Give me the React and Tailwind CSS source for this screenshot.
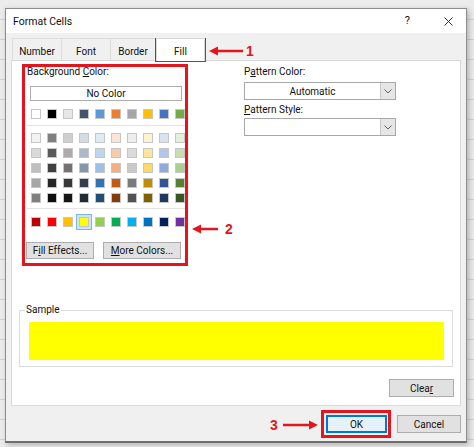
import React from "react";

const THEME = ["#FFFFFF", "#000000", "#E7E6E6", "#44546A", "#5B9BD5", "#ED7D31", "#A5A5A5", "#FFC000", "#4472C4", "#70AD47"];

const TINTS = [
  ["#F2F2F2", "#7F7F7F", "#D0CECE", "#D6DCE4", "#DDEBF7", "#FCE4D6", "#EDEDED", "#FFF2CC", "#D9E1F2", "#E2EFDA"],
  ["#D9D9D9", "#595959", "#AEAAAA", "#ACB9CA", "#BDD7EE", "#F8CBAD", "#DBDBDB", "#FFE699", "#B4C6E7", "#C6E0B4"],
  ["#BFBFBF", "#404040", "#757171", "#8497B0", "#9BC2E6", "#F4B084", "#C9C9C9", "#FFD966", "#8EA9DB", "#A9D08E"],
  ["#A6A6A6", "#262626", "#3A3838", "#333F4F", "#2F75B5", "#C65911", "#7B7B7B", "#BF8F00", "#305496", "#548235"],
  ["#808080", "#0D0D0D", "#161616", "#222B35", "#1F4E78", "#833C0C", "#525252", "#806000", "#203764", "#375623"],
];

const STANDARD = ["#C00000", "#FF0000", "#FFC000", "#FFFF00", "#92D050", "#00B050", "#00B0F0", "#0070C0", "#002060", "#7030A0"];

const Swatch = ({ color, selected }) => (
  <div className={selected ? "-m-[3px] border border-[#7fb4e6] bg-[#cce4f7] p-[2px]" : ""}>
    <div className="h-[10px] w-[10px] border border-[#c6c6c6]" style={{ backgroundColor: color }} />
  </div>
);

const SwatchRow = ({ colors, selectedIndex }) => (
  <div className="flex gap-[6px]">
    {colors.map((c, i) => (
      <Swatch key={i} color={c} selected={i === selectedIndex} />
    ))}
  </div>
);

const Chevron = () => (
  <svg width="8" height="5" viewBox="0 0 8 5">
    <polyline points="0.5,0.5 4,4 7.5,0.5" fill="none" stroke="#606060" strokeWidth="1" />
  </svg>
);

const Dropdown = ({ value }) => (
  <div className="flex h-[18px] w-[152px] border border-[#a8a8a8] bg-white">
    <div className="flex flex-1 items-center justify-center">{value}</div>
    <div className="flex w-[15px] items-center justify-center border-l border-[#c8c8c8] bg-[#e6e6e6]">
      <Chevron />
    </div>
  </div>
);

const Button = ({ className = "", children }) => (
  <div className={"flex items-center justify-center border border-[#adadad] bg-[#e1e1e1] " + className}>
    {children}
  </div>
);

const Tab = ({ label, width, active }) => (
  <div
    className={
      active
        ? "relative z-10 -mb-px flex items-center justify-center border border-b-0 border-[#d9d9d9] bg-white pt-[3px]"
        : "flex items-center justify-center border-t border-r border-[#dcdcdc] pt-[3px] first:border-l"
    }
    style={{ width }}
  >
    {label}
  </div>
);

export default function App() {
  return (
    <div
      className="relative h-[447px] w-[474px] overflow-hidden bg-[#ececec] bg-[repeating-linear-gradient(180deg,#ececec_0px,#ececec_19px,#d2d2d2_19px,#d2d2d2_20px)] pt-[8px] pl-[5px] text-[10px] text-[#111]"
      style={{ fontFamily: 'Roboto, "Noto Sans", sans-serif' }}
    >
      <div className="flex h-[435px] w-[462px] flex-col border border-[#8c8c8c] border-b-2 border-b-[#6e6e6e] bg-[#f0f0f0] shadow-[2px_2px_6px_rgba(0,0,0,0.25)]">
        {/* title bar */}
        <div className="flex h-[24px] shrink-0 items-center bg-white pt-px pl-[7px]">
          <span className="text-[10.5px]">Format Cells</span>
          <span className="ml-auto mr-[34px] text-[11px]">?</span>
          <svg className="mr-[13px]" width="9" height="9" viewBox="0 0 9 9">
            <path d="M0.5 0.5 L8.5 8.5 M8.5 0.5 L0.5 8.5" stroke="#333" strokeWidth="1" />
          </svg>
        </div>

        {/* tabs */}
        <div className="mt-[5px] flex h-[22px] shrink-0 pl-[6px]">
          <Tab label="Number" width={50} />
          <Tab label="Font" width={49} />
          <Tab label="Border" width={45} />
          <Tab label="Fill" width={49} active />
        </div>

        {/* tab panel */}
        <div className="mx-[5px] flex h-[346px] shrink-0 flex-col border border-[#d9d9d9] bg-white">
          <div className="flex">
            {/* background colour */}
            <div className="ml-[14px] w-[160px] pt-[4px]">
              <div className="pl-px leading-[14px]">
                Background <span className="underline">C</span>olor:
              </div>
              <div className="mt-[7px] ml-[4px] flex h-[15px] w-[152px] items-center justify-center border border-[#adadad] bg-white">
                No Color
              </div>
              <div className="mt-[8px] ml-[5px]">
                <SwatchRow colors={THEME} />
              </div>
              <div className="mt-[6px] mx-px h-px bg-[#e3e3e3]" />
              <div className="mt-[7px] ml-[5px] flex flex-col gap-[5px]">
                {TINTS.map((row, i) => (
                  <SwatchRow key={i} colors={row} />
                ))}
              </div>
              <div className="mt-[5px] mx-px h-px bg-[#e3e3e3]" />
              <div className="mt-[8px] ml-[5px]">
                <SwatchRow colors={STANDARD} selectedIndex={3} />
              </div>
              <div className="mt-[15px] flex gap-[9px]">
                <Button className="h-[17px] w-[68px]">
                  F<span className="underline">i</span>ll Effects...
                </Button>
                <Button className="h-[17px] w-[78px]">
                  <span className="underline">M</span>ore Colors...
                </Button>
              </div>
            </div>

            {/* pattern */}
            <div className="ml-[58px] pt-[4px]">
              <div className="leading-[14px]">
                P<span className="underline">a</span>ttern Color:
              </div>
              <div className="mt-[3px]">
                <Dropdown value="Automatic" />
              </div>
              <div className="mt-[3px] leading-[14px]">
                <span className="underline">P</span>attern Style:
              </div>
              <div className="mt-px">
                <Dropdown value="" />
              </div>
            </div>
          </div>

          {/* sample */}
          <fieldset className="mx-[7px] mt-[44px] border border-[#dcdcdc] p-0">
            <legend className="ml-[5px] px-px leading-[14px]">Sample</legend>
            <div className="mt-[5px] mb-[6px] ml-[9px] mr-[8px] h-[38px] bg-[#FFFF00]" />
          </fieldset>

          <div className="mt-[12px] mr-[6px] self-end">
            <Button className="h-[18px] w-[65px]">
              Clea<span className="underline">r</span>
            </Button>
          </div>
        </div>

        {/* dialog buttons */}
        <div className="mt-[9px] flex justify-end gap-[10px] pr-[5px]">
          <div className="flex h-[18px] w-[61px] items-center justify-center border border-[#0078d7] bg-[#e5f1fb] shadow-[inset_0_0_0_1px_#0078d7]">
            OK
          </div>
          <Button className="h-[18px] w-[64px]">Cancel</Button>
        </div>
      </div>

      {/* annotations */}
      <div className="pointer-events-none absolute left-[155px] top-[38px] h-[24px] w-[51px] border-2 border-[#e3161e]" />
      <div className="pointer-events-none absolute left-[22px] top-[64px] h-[202px] w-[166px] border-[3px] border-[#e3161e]" />
      <div className="pointer-events-none absolute left-[321px] top-[410px] h-[28px] w-[70px] border-[3px] border-[#e3161e]" />

      <svg className="pointer-events-none absolute left-0 top-0" width="474" height="447" viewBox="0 0 474 447">
        <g fill="#e3161e" stroke="#e3161e">
          <line x1="216" y1="51" x2="243" y2="51" strokeWidth="2.5" />
          <polygon points="209,51 218,46.5 218,55.5" stroke="none" />
          <line x1="199" y1="229" x2="218" y2="229" strokeWidth="2.5" />
          <polygon points="192,229 201,224.5 201,233.5" stroke="none" />
          <line x1="283" y1="425" x2="311" y2="425" strokeWidth="2.5" />
          <polygon points="318,425 309,420.5 309,429.5" stroke="none" />
        </g>
      </svg>

      <div
        className="absolute left-[246px] top-[42px] text-[14px] font-bold leading-[18px] text-[#e3161e]"
        style={{ fontFamily: '"Liberation Sans", sans-serif' }}
      >
        1
      </div>
      <div
        className="absolute left-[225px] top-[220px] text-[14px] font-bold leading-[18px] text-[#e3161e]"
        style={{ fontFamily: '"Liberation Sans", sans-serif' }}
      >
        2
      </div>
      <div
        className="absolute left-[270px] top-[416px] text-[14px] font-bold leading-[18px] text-[#e3161e]"
        style={{ fontFamily: '"Liberation Sans", sans-serif' }}
      >
        3
      </div>
    </div>
  );
}
